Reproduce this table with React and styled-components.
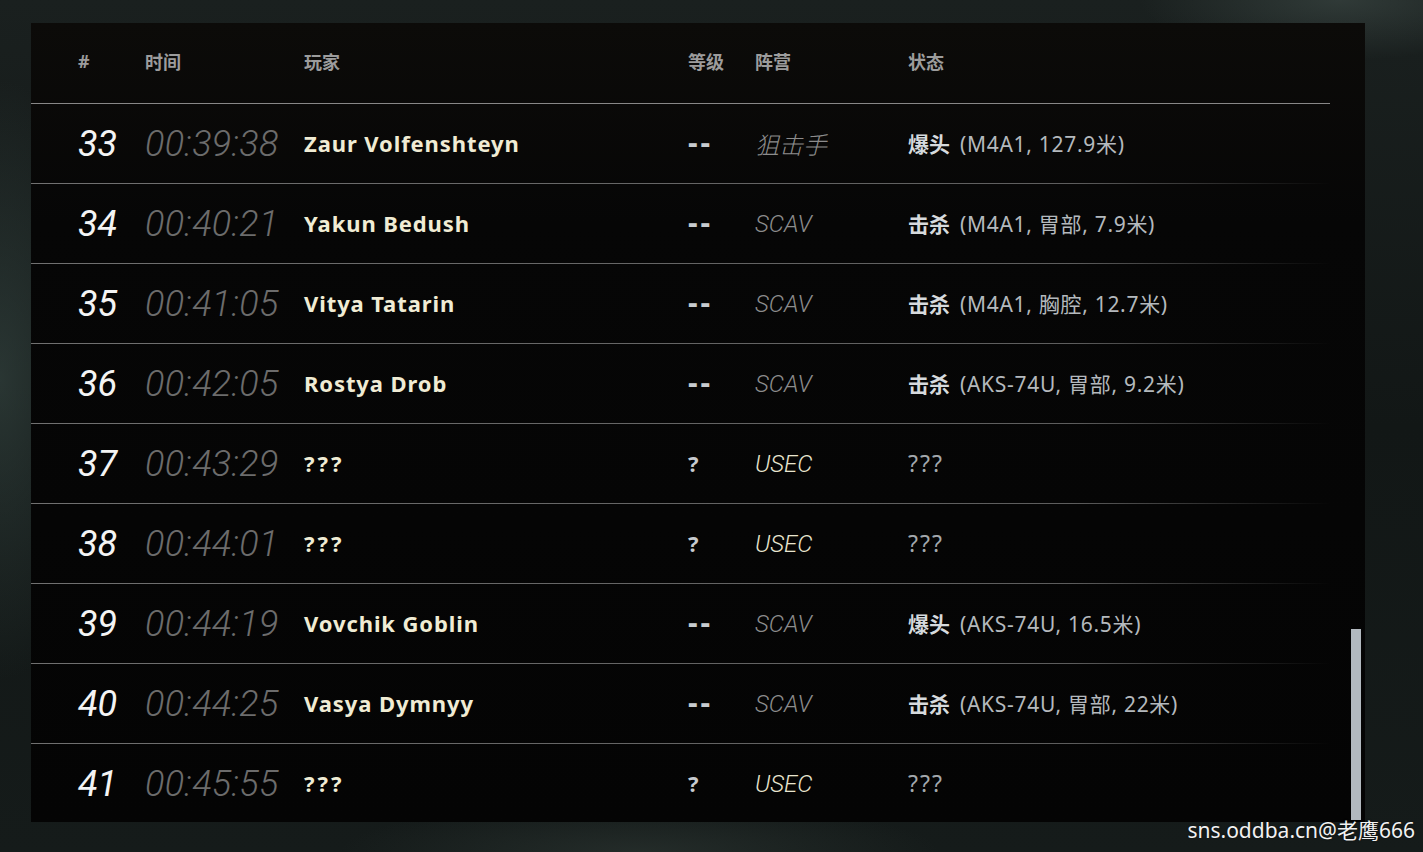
import React from 'react';
import styled, { createGlobalStyle, css } from 'styled-components';

const rows = [
  { no: 33, time: '00:39:38', name: 'Zaur Volfenshteyn', level: '--', side: '狙击手', sideTone: 'dim', kind: '爆头', detail: '(M4A1, 127.9米)' },
  { no: 34, time: '00:40:21', name: 'Yakun Bedush', level: '--', side: 'SCAV', sideTone: 'dim', kind: '击杀', detail: '(M4A1, 胃部, 7.9米)' },
  { no: 35, time: '00:41:05', name: 'Vitya Tatarin', level: '--', side: 'SCAV', sideTone: 'dim', kind: '击杀', detail: '(M4A1, 胸腔, 12.7米)' },
  { no: 36, time: '00:42:05', name: 'Rostya Drob', level: '--', side: 'SCAV', sideTone: 'dim', kind: '击杀', detail: '(AKS-74U, 胃部, 9.2米)' },
  { no: 37, time: '00:43:29', name: '???', level: '?', side: 'USEC', sideTone: 'bright', kind: null, detail: '???' },
  { no: 38, time: '00:44:01', name: '???', level: '?', side: 'USEC', sideTone: 'bright', kind: null, detail: '???' },
  { no: 39, time: '00:44:19', name: 'Vovchik Goblin', level: '--', side: 'SCAV', sideTone: 'dim', kind: '爆头', detail: '(AKS-74U, 16.5米)' },
  { no: 40, time: '00:44:25', name: 'Vasya Dymnyy', level: '--', side: 'SCAV', sideTone: 'dim', kind: '击杀', detail: '(AKS-74U, 胃部, 22米)' },
  { no: 41, time: '00:45:55', name: '???', level: '?', side: 'USEC', sideTone: 'bright', kind: null, detail: '???' },
];

export default function App() {
  return (
    <Page>
      <GlobalStyle />
      <Panel>
        <Table>
          <HeadRow>
            <HeadCell>#</HeadCell>
            <HeadCell>时间</HeadCell>
            <HeadCell>玩家</HeadCell>
            <HeadCell>等级</HeadCell>
            <HeadCell>阵营</HeadCell>
            <HeadCell>状态</HeadCell>
          </HeadRow>
          {rows.map(r => (
            <Row key={r.no}>
              <Num>{r.no}</Num>
              <Time>{r.time}</Time>
              <Name unknown={r.name === '???'}>{r.name}</Name>
              <Level dash={r.level === '--'}>{r.level}</Level>
              <Side tone={r.sideTone}>{r.side}</Side>
              <Status>
                {r.kind && <Kind>{r.kind}</Kind>}
                <Detail unknown={!r.kind}>{r.detail}</Detail>
              </Status>
            </Row>
          ))}
        </Table>
        <Track>
          <Thumb />
        </Track>
      </Panel>
      <Watermark>sns.oddba.cn@老鹰666</Watermark>
    </Page>
  );
}

const GlobalStyle = createGlobalStyle`
  html, body {
    margin: 0;
    padding: 0;
    background: #151a19;
  }
`;

const Page = styled.div`
  position: relative;
  width: 1423px;
  height: 852px;
  overflow: hidden;
  box-sizing: border-box;
  padding: 23px 58px 0 31px;
  background:
    radial-gradient(ellipse 120px 300px at 0px 380px, rgba(60, 78, 74, 0.55), transparent),
    radial-gradient(ellipse 200px 60px at 1340px 0px, rgba(70, 84, 80, 0.5), transparent),
    radial-gradient(ellipse 300px 50px at 640px 852px, rgba(50, 60, 56, 0.5), transparent),
    linear-gradient(180deg, #1a201f 0%, #121716 50%, #151b1a 100%);
`;

const Panel = styled.div`
  display: flex;
  width: 1334px;
  height: 799px;
  overflow: hidden;
  background: linear-gradient(180deg, #0c0b09 0%, #060606 25%, #040404 100%);
`;

const Table = styled.div`
  width: 1299px;
  display: flex;
  flex-direction: column;
`;

const grid = css`
  display: grid;
  grid-template-columns: 67px 159px 384px 67px 153px 1fr;
  align-items: center;
  padding-left: 47px;
`;

const HeadRow = styled.div`
  ${grid};
  flex: none;
  height: 80px;
  border-bottom: 1px solid rgba(190, 190, 190, 0.7);
`;

const HeadCell = styled.div`
  font-family: "Noto Sans", "Noto Sans CJK SC", sans-serif;
  font-weight: 700;
  font-size: 18px;
  color: #9c9c9c;
  padding-bottom: 4px;
`;

const Row = styled.div`
  ${grid};
  flex: none;
  height: 79px;
  border-bottom: 1px solid transparent;
  border-image: linear-gradient(90deg, rgba(200, 200, 200, 0.55) 0%, rgba(200, 200, 200, 0.45) 80%, rgba(200, 200, 200, 0) 100%) 1;
`;

const Num = styled.div`
  font-family: Roboto, "Liberation Sans", sans-serif;
  font-style: italic;
  font-weight: 400;
  font-size: 36px;
  color: #f4f4f4;
`;

const Time = styled.div`
  font-family: Roboto, "Liberation Sans", sans-serif;
  font-style: italic;
  font-weight: 300;
  font-size: 36px;
  color: #6c6c6c;
  letter-spacing: 0.3px;
`;

const Name = styled.div`
  font-family: "Noto Sans", sans-serif;
  font-weight: 700;
  font-size: 22px;
  color: #f0ecd4;
  letter-spacing: ${p => (p.unknown ? '3px' : '0.9px')};
  padding-bottom: 2px;
`;

const Level = styled.div`
  font-family: "Noto Sans", sans-serif;
  font-weight: 700;
  color: #c7cbcf;
  ${p => p.dash
    ? css`
      font-size: 30px;
      letter-spacing: 3px;
      padding-bottom: 4px;
    `
    : css`
      font-size: 22px;
      padding-bottom: 2px;
    `}
`;

const Side = styled.div`
  font-family: Roboto, "Noto Sans CJK SC", sans-serif;
  font-style: italic;
  font-weight: 300;
  font-size: 24px;
  color: ${p => (p.tone === 'bright' ? '#e9e5cf' : '#8c8c8c')};
`;

const Status = styled.div`
  display: flex;
  align-items: baseline;
  gap: 10px;
  font-family: "Noto Sans", "Noto Sans CJK SC", sans-serif;
  font-size: 21px;
  padding-bottom: 2px;
`;

const Kind = styled.span`
  font-weight: 700;
  color: #d6dadd;
`;

const Detail = styled.span`
  color: ${p => (p.unknown ? '#a3a8ad' : '#b4b9bd')};
  letter-spacing: ${p => (p.unknown ? '2px' : '0.7px')};
  font-size: ${p => (p.unknown ? '23px' : '21px')};
`;

const Track = styled.div`
  width: 10px;
  margin-left: 21px;
  display: flex;
  flex-direction: column;
  justify-content: flex-end;
`;

const Thumb = styled.div`
  height: 191px;
  margin-bottom: 2px;
  background: #b2b9bf;
`;

const Watermark = styled.div`
  position: absolute;
  right: 8px;
  bottom: 8px;
  font-family: "Noto Sans", "Noto Sans CJK SC", sans-serif;
  font-size: 21px;
  color: #f2f2f2;
  text-shadow: 0 0 2px rgba(0, 0, 0, 0.6);
`;
